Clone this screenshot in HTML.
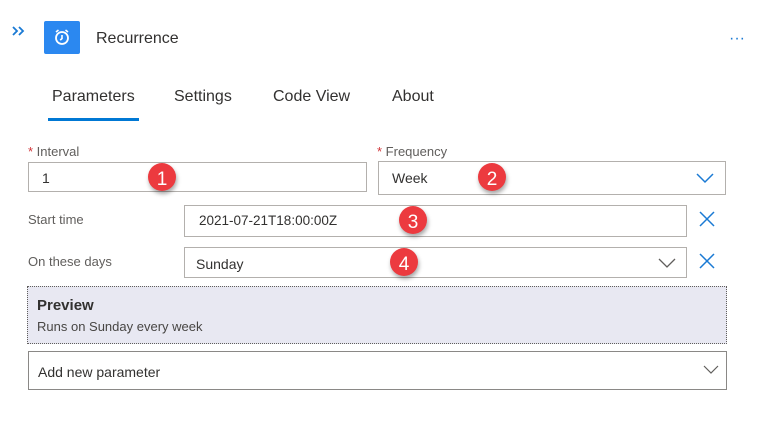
<!DOCTYPE html><html><head><style>
body{margin:0;width:768px;height:444px;background:#fff;font-family:"Segoe UI","Liberation Sans",sans-serif;color:#323130;position:relative;overflow:hidden}
.a{position:absolute}
.box{position:absolute;border:1px solid #b3b0ad;box-sizing:border-box;background:#fff}
.t{position:absolute;white-space:nowrap}
.lbl{font-size:13px;color:#605e5c}
.val{font-size:14px;color:#323130}
.b{position:absolute;width:28px;height:28px;border-radius:50%;background:#ec3a3f;color:#fff;font-size:19px;text-align:center;line-height:34px;box-shadow:1px 3px 4px rgba(0,0,0,.35)}
</style></head><body>
<svg class="a" style="left:11px;top:26px" width="16" height="10"><path d="M2 1l4 4-4 4M8 1l4 4-4 4" stroke="#1a7ad4" stroke-width="1.8" fill="none"/></svg>
<div class="a" style="left:44px;top:21px;width:36px;height:33px;background:#2b88f0;border-radius:2px"></div>
<svg class="a" style="left:52px;top:27px" width="20" height="20" viewBox="0 0 20 20"><circle cx="10" cy="11" r="6" fill="none" stroke="#fff" stroke-width="1.8"/><path d="M10 8v3.5l-1.8 1.6M4 5l2.5-2M16 5l-2.5-2" stroke="#fff" stroke-width="1.6" fill="none"/></svg>
<div class="t" style="left:96px;top:30px;font-size:16px">Recurrence</div>
<div class="t" style="left:729px;top:30px;font-size:16px;color:#1a7ad4">···</div>
<div class="t" style="left:52px;top:88px;font-size:16px">Parameters</div>
<div class="t" style="left:174px;top:88px;font-size:16px">Settings</div>
<div class="t" style="left:273px;top:88px;font-size:16px">Code View</div>
<div class="t" style="left:392px;top:88px;font-size:16px">About</div>
<div class="a" style="left:48px;top:118px;width:91px;height:3px;background:#0078d4"></div>
<div class="t lbl" style="left:28px;top:144px"><span style="color:#d13438">*</span> Interval</div>
<div class="box" style="left:28px;top:162px;width:339px;height:30px"></div>
<div class="t val" style="left:42px;top:170px">1</div>
<div class="t lbl" style="left:377px;top:144px"><span style="color:#d13438">*</span> Frequency</div>
<div class="box" style="left:378px;top:161px;width:348px;height:34px"></div>
<div class="t val" style="left:392px;top:170px">Week</div>
<svg class="a" style="left:696px;top:172px" width="18" height="12"><path d="M1 2l8 8 8-8" stroke="#1a7ad4" stroke-width="1.5" fill="none"/></svg>
<div class="t lbl" style="left:28px;top:212px">Start time</div>
<div class="box" style="left:184px;top:205px;width:503px;height:32px"></div>
<div class="t val" style="left:199px;top:213px;font-size:13.5px">2021-07-21T18:00:00Z</div>
<svg class="a" style="left:699px;top:211px" width="16" height="16"><path d="M1 1l14 14M15 1L1 15" stroke="#1a7ad4" stroke-width="1.5"/></svg>
<div class="t lbl" style="left:28px;top:254px">On these days</div>
<div class="box" style="left:184px;top:247px;width:503px;height:31px"></div>
<div class="t val" style="left:196px;top:256px">Sunday</div>
<svg class="a" style="left:658px;top:257px" width="18" height="12"><path d="M1 2l8 8 8-8" stroke="#605e5c" stroke-width="1.3" fill="none"/></svg>
<svg class="a" style="left:699px;top:253px" width="16" height="16"><path d="M1 1l14 14M15 1L1 15" stroke="#1a7ad4" stroke-width="1.5"/></svg>
<div class="a" style="left:27px;top:286px;width:700px;height:58px;box-sizing:border-box;border:1px dotted #605e5c;background:#e8e8f2"></div>
<div class="t" style="left:37px;top:297px;font-size:15px;font-weight:bold">Preview</div>
<div class="t" style="left:37px;top:319px;font-size:13px;color:#484644">Runs on Sunday every week</div>
<div class="box" style="left:28px;top:351px;width:699px;height:39px;border-color:#8a8886"></div>
<div class="t val" style="left:38px;top:364px">Add new parameter</div>
<svg class="a" style="left:703px;top:365px" width="16" height="10"><path d="M1 1l7 7 7-7" stroke="#605e5c" stroke-width="1.2" fill="none"/></svg>
<div class="b" style="left:148px;top:163px">1</div>
<div class="b" style="left:478px;top:163px">2</div>
<div class="b" style="left:399px;top:206px">3</div>
<div class="b" style="left:390px;top:248px">4</div>
</body></html>
